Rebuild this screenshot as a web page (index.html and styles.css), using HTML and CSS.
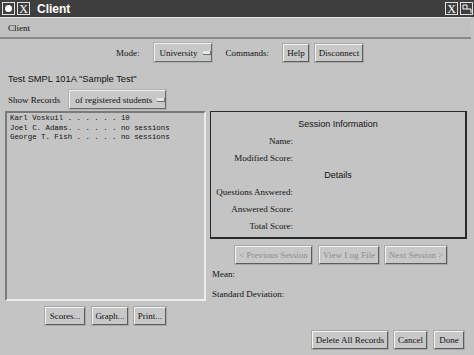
FILE: index.html
```html
<!DOCTYPE html>
<html lang="en">
<head>
    <meta charset="UTF-8">
    <title>Client</title>
    <link rel="stylesheet" href="styles.css">
</head>
<body>
    <div class="window">
        <div class="titlebar">
            <span class="tb-icon"><span class="dot"></span></span>
            <span class="tb-icon x">X</span>
            <span class="tb-title">Client</span>
            <span class="tb-spacer"></span>
            <span class="tb-icon x">X</span>
            <span class="tb-icon">
                <svg width="10" height="10" viewBox="0 0 10 10"><path d="M1 1h4v4h-4zM5 5h4v4" fill="none" stroke="#fff" stroke-width="1"/></svg>
            </span>
        </div>
        <div class="menubar"><span class="menu-item">Client</span></div>

        <div class="main">
            <div class="mode-row">
                <span class="label">Mode:</span>
                <span class="dropdown mode-drop">University <span class="drop-mark"></span></span>
                <span class="label cmd">Commands:</span>
                <span class="btn w-help">Help</span>
                <span class="btn w-disc">Disconnect</span>
            </div>

            <div class="test-title">Test SMPL 101A "Sample Test"</div>

            <div class="show-row">
                <span class="label">Show Records</span>
                <span class="dropdown show-drop">of registered students <span class="drop-mark"></span></span>
            </div>

            <div class="content">
                <div class="left-col">
                    <div class="listbox">
                        <div>Karl Voskuil . . . . . . 10</div>
                        <div>Joel C. Adams. . . . . . no sessions</div>
                        <div>George T. Fish . . . . . no sessions</div>
                    </div>
                    <div class="list-buttons">
                        <span class="btn w-scores">Scores...</span>
                        <span class="btn w-graph">Graph...</span>
                        <span class="btn w-print">Print...</span>
                    </div>
                </div>

                <div class="right-col">
                    <div class="session">
                        <div class="sess-head">Session Information</div>
                        <div class="sess-row"><span class="sess-label">Name:</span></div>
                        <div class="sess-row"><span class="sess-label">Modified Score:</span></div>
                        <div class="sess-head">Details</div>
                        <div class="sess-row"><span class="sess-label">Questions Answered:</span></div>
                        <div class="sess-row"><span class="sess-label">Answered Score:</span></div>
                        <div class="sess-row"><span class="sess-label">Total Score:</span></div>
                    </div>
                    <div class="sess-buttons">
                        <span class="btn disabled w-prev">&lt; Previous Session</span>
                        <span class="btn disabled w-log">View Log File</span>
                        <span class="btn disabled w-next">Next Session &gt;</span>
                    </div>
                    <div class="stat">Mean:</div>
                    <div class="stat">Standard Deviation:</div>
                </div>
            </div>

            <div class="footer">
                <span class="btn w-delete">Delete All Records</span>
                <span class="btn w-cancel">Cancel</span>
                <span class="btn w-done">Done</span>
            </div>
        </div>
    </div>
</body>
</html>
```

FILE: styles.css
```css
body {
    margin: 0;
    padding: 0;
    background: #c4c4c4;
    font-family: 'Liberation Serif', serif;
    font-size: 9px;
    color: #111;
}

.window {
    width: 474px;
    height: 355px;
    display: flex;
    flex-direction: column;
    overflow: hidden;
}

.titlebar {
    height: 17px;
    background: #3e3e3e;
    display: flex;
    align-items: center;
    padding: 0 1px 0 2px;
    gap: 2px;
    flex-shrink: 0;
}

.tb-icon {
    width: 11px;
    height: 11px;
    border: 1px solid #e0e0e0;
    display: flex;
    align-items: center;
    justify-content: center;
    color: #fff;
    font-family: 'Liberation Serif', serif;
    font-size: 12px;
    line-height: 1;
}

.tb-icon .dot {
    width: 7px;
    height: 7px;
    border-radius: 50%;
    background: #fff;
}

.tb-title {
    color: #fff;
    font-family: 'Liberation Sans', sans-serif;
    font-weight: bold;
    font-size: 12px;
    margin-left: 5px;
}

.tb-spacer {
    flex: 1;
}

.menubar {
    height: 19px;
    background: #c0c0c0;
    border-top: 1px solid #e6e6e6;
    border-bottom: 2px solid #8a8a8a;
    margin: 0 3px 0 0;
    display: flex;
    align-items: center;
    padding-left: 8px;
    flex-shrink: 0;
}

.main {
    flex: 1;
    display: flex;
    flex-direction: column;
}

.label {
    white-space: nowrap;
}

.mode-row {
    display: flex;
    align-items: center;
    height: 19px;
    margin-top: 4px;
    padding-left: 116px;
}

.label.cmd {
    margin-left: 14px;
    margin-right: 14px;
}

.mode-drop {
    margin-left: 14px;
    width: 58px;
}

.dropdown {
    box-sizing: border-box;
    height: 19px;
    display: inline-flex;
    align-items: center;
    padding-left: 5px;
    white-space: nowrap;
    background: #c8c8c8;
    border: 1px solid;
    border-color: #f0f0f0 #6a6a6a #6a6a6a #f0f0f0;
    box-shadow: 0 0 0 1px #b0b0b0;
}

.drop-mark {
    display: inline-block;
    width: 7px;
    height: 3px;
    margin-left: 5px;
    background: #e8e8e8;
    border-bottom: 1px solid #707070;
    border-right: 1px solid #707070;
}

.btn {
    box-sizing: border-box;
    height: 18px;
    display: inline-flex;
    align-items: center;
    justify-content: center;
    padding: 0;
    background: #c8c8c8;
    border: 1px solid;
    border-color: #f4f4f4 #5c5c5c #5c5c5c #f4f4f4;
    box-shadow: 0 0 0 1px #a8a8a8;
    white-space: nowrap;
    flex-shrink: 0;
}

.btn.disabled {
    color: #8c8c8c;
}

.w-help { width: 26px; margin-left: 0; }
.w-disc { width: 48px; margin-left: 6px; }
.w-scores { width: 40px; }
.w-graph { width: 36px; margin-left: 7px; }
.w-print { width: 32px; margin-left: 6px; }
.w-prev { width: 77px; }
.w-log { width: 60px; margin-left: 7px; }
.w-next { width: 62px; margin-left: 6px; }
.w-delete { width: 76px; }
.w-cancel { width: 33px; margin-left: 6px; }
.w-done { width: 30px; margin-left: 7px; }

.test-title {
    font-family: 'Liberation Sans', sans-serif;
    font-size: 9.3px;
    margin: 12px 0 0 8px;
}

.show-row {
    display: flex;
    align-items: center;
    margin: 6px 0 0 8px;
}

.show-drop {
    margin-left: 9px;
    width: 97px;
}

.content {
    display: flex;
    margin: 2px 0 0 5px;
    gap: 4px;
}

.left-col {
    width: 201px;
    display: flex;
    flex-direction: column;
}

.listbox {
    box-sizing: border-box;
    height: 190px;
    border: 2px solid;
    border-color: #7a7a7a #ececec #ececec #7a7a7a;
    padding: 1px 3px 0;
    font-family: 'Liberation Mono', monospace;
    font-size: 7.4px;
    line-height: 9.6px;
}

.listbox div {
    white-space: pre;
}

.list-buttons {
    display: flex;
    justify-content: center;
    margin-top: 6px;
}

.right-col {
    width: 257px;
    display: flex;
    flex-direction: column;
}

.session {
    box-sizing: border-box;
    height: 128px;
    border: 1px solid #2a2a2a;
    border-bottom-width: 2px;
    border-right-width: 2px;
    padding-top: 4px;
}

.sess-head {
    text-align: center;
    height: 17px;
    line-height: 17px;
    font-family: 'Liberation Sans', sans-serif;
    font-size: 9px;
}

.sess-row {
    height: 17px;
    line-height: 17px;
}

.sess-label {
    display: inline-block;
    width: 82px;
    text-align: right;
    white-space: nowrap;
}

.sess-buttons {
    display: flex;
    margin-top: 7px;
    padding-left: 25px;
}

.stat {
    height: 19px;
    line-height: 19px;
    padding-left: 2px;
    margin-top: 1px;
}

.footer {
    display: flex;
    justify-content: flex-end;
    margin-top: 6px;
    padding-right: 10px;
}
```
